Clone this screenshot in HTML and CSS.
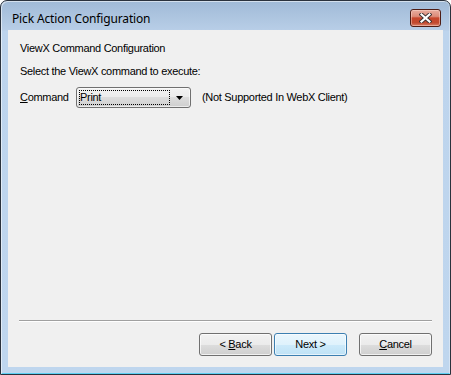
FILE: index.html
```html
<!DOCTYPE html>
<html>
<head>
<meta charset="utf-8">
<title>Pick Action Configuration</title>
<link rel="stylesheet" href="styles.css">
</head>
<body>
<div class="window">
  <div class="titlebar">
    <span class="title">Pick Action Configuration</span>
    <div class="close">
      <svg width="13" height="10" viewBox="0 0 13 10">
        <path d="M2.5 1.5 L10.5 8.5 M10.5 1.5 L2.5 8.5" stroke="#3b3030" stroke-width="4" stroke-linecap="square" fill="none"/>
        <path d="M2.5 1.5 L10.5 8.5 M10.5 1.5 L2.5 8.5" stroke="#ffffff" stroke-width="2.2" stroke-linecap="square" fill="none"/>
      </svg>
    </div>
  </div>
  <div class="client">
    <div class="content">
      <div class="text heading">ViewX Command Configuration</div>
      <div class="text prompt">Select the ViewX command to execute:</div>
      <div class="row">
        <span class="text label"><u>C</u>ommand</span>
        <div class="combo">
          <div class="combo-value text">Print</div>
          <div class="combo-arrow">
            <svg width="7" height="4" viewBox="0 0 7 4"><polygon points="0,0 7,0 3.5,4" fill="#000"/></svg>
          </div>
        </div>
        <span class="text note">(Not Supported In WebX Client)</span>
      </div>
    </div>
    <div class="footer">
      <div class="sep"></div>
      <div class="buttons">
        <div class="btn text"><span>&lt; <u>B</u>ack</span></div>
        <div class="btn default text"><span>Next &gt;</span></div>
        <div class="btn cancel text"><span><u>C</u>ancel</span></div>
      </div>
    </div>
  </div>
</div>
</body>
</html>
```
FILE: styles.css
```css
body {
  margin: 0;
  background: #ffffff;
}

.window {
  width: 451px;
  height: 375px;
  box-sizing: border-box;
  border: 1px solid #2a323d;
  border-radius: 7px 7px 0 0;
  background: linear-gradient(#a0bad7 0px, #b8cee7 29px, #bdd4ed 30px, #bfd6ee 100%);
  box-shadow: inset 1px 1px 0 rgba(255,255,255,0.55), inset -1px 0 0 rgba(255,255,255,0.35), inset 0 -1px 0 #5ccff2;
  padding: 0 7px 7px;
  display: flex;
  flex-direction: column;
}

.titlebar {
  height: 29px;
  display: flex;
  align-items: flex-start;
  justify-content: space-between;
  flex-shrink: 0;
}

.title {
  font-family: "Noto Sans", "Open Sans", sans-serif;
  font-size: 12px;
  line-height: 16px;
  margin-top: 10px;
  margin-left: 4px;
  color: #000;
  letter-spacing: -0.15px;
}

.close {
  width: 31px;
  height: 18px;
  box-sizing: border-box;
  margin-top: 8px;
  margin-right: 2px;
  border: 1px solid #4e1d15;
  border-radius: 3px;
  background: linear-gradient(#e9ad9f 0%, #dc8c7a 40%, #c7462c 50%, #c24a2f 80%, #d9826a 100%);
  box-shadow: inset 0 0 0 1px rgba(255,225,215,0.45);
  display: flex;
  align-items: center;
  justify-content: center;
}

.client {
  flex: 1;
  background: #f0f0f0;
  display: flex;
  flex-direction: column;
  padding: 12px 11px 11px;
}

.text {
  font-family: "Liberation Sans", Arial, sans-serif;
  font-size: 11px;
  line-height: 13px;
  letter-spacing: -0.3px;
  color: #000;
}

.content {
  padding-left: 1px;
}

.prompt {
  margin-top: 10px;
}

.row {
  margin-top: 9px;
  height: 21px;
  display: flex;
  align-items: center;
}

.label {
  width: 56px;
}

.combo {
  width: 115px;
  height: 21px;
  box-sizing: border-box;
  border: 1px solid #707070;
  border-radius: 3px;
  background: linear-gradient(#f2f2f2 0%, #ebebeb 50%, #dddddd 50%, #cfcfcf 100%);
  box-shadow: inset 0 0 0 1px rgba(255,255,255,0.6);
  padding: 2px;
  display: flex;
}

.combo-value {
  flex: 1;
  border: 1px dotted #000;
  padding-left: 0;
  line-height: 13px;
}

.combo-arrow {
  width: 17px;
  display: flex;
  align-items: center;
  justify-content: center;
  padding-left: 1px;
}

.note {
  margin-left: 11px;
}

.footer {
  margin-top: auto;
}

.sep {
  border-top: 1px solid #a0a0a0;
  border-bottom: 1px solid #ffffff;
}

.buttons {
  margin-top: 11px;
  display: flex;
  justify-content: flex-end;
  gap: 2px;
}

.btn {
  width: 73px;
  height: 23px;
  box-sizing: border-box;
  border: 1px solid #707070;
  border-radius: 3px;
  background: linear-gradient(#f2f2f2 0%, #ebebeb 50%, #dddddd 50%, #cfcfcf 100%);
  box-shadow: inset 0 0 0 1px rgba(255,255,255,0.7);
  display: flex;
  align-items: center;
  justify-content: center;
}

.btn.default {
  border-color: #3c7fb1;
  background: linear-gradient(#eaf6fd 0%, #dff2fc 50%, #cdeafa 50%, #bfe2f6 100%);
  box-shadow: inset 0 0 0 1px rgba(255,255,255,0.6);
}

.btn.cancel {
  margin-left: 10px;
}
```
